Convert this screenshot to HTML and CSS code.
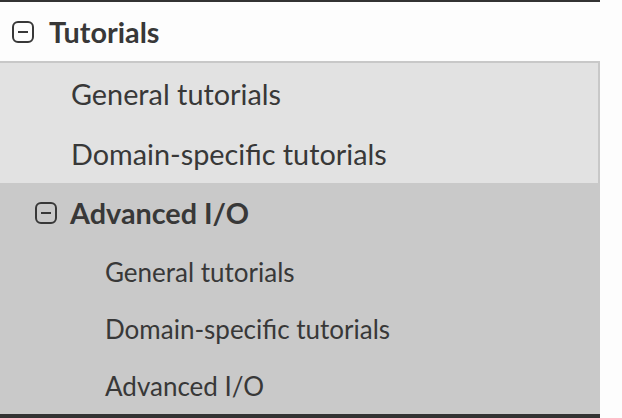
FILE: index.html
```html
<!DOCTYPE html>
<html>

<head>
    <title>Tutorials</title>
    <link rel="stylesheet" href="styles.css">
</head>

<body>
    <nav class="toc">
        <!-- Top section -->
        <div class="toc-head">
            <svg class="toggle" width="22" height="22" viewBox="0 0 22 22">
                <rect x="1" y="1" width="20" height="20" rx="5" fill="none" stroke="currentColor" stroke-width="2"/>
                <line x1="6" y1="11" x2="16" y2="11" stroke="currentColor" stroke-width="2"/>
            </svg>
            <span>Tutorials</span>
        </div>

        <ul class="toc-list level-1">
            <li class="toc-item">General tutorials</li>
            <li class="toc-item">Domain-specific tutorials</li>
        </ul>

        <!-- Current section -->
        <div class="toc-group">
            <div class="toc-head sub-head">
                <svg class="toggle" width="22" height="22" viewBox="0 0 22 22">
                    <rect x="1" y="1" width="20" height="20" rx="5" fill="none" stroke="currentColor" stroke-width="2"/>
                    <line x1="6" y1="11" x2="16" y2="11" stroke="currentColor" stroke-width="2"/>
                </svg>
                <span>Advanced I/O</span>
            </div>
            <ul class="toc-list level-2">
                <li class="toc-item">General tutorials</li>
                <li class="toc-item">Domain-specific tutorials</li>
                <li class="toc-item">Advanced I/O</li>
            </ul>
        </div>

        <div class="toc-foot"></div>
    </nav>
</body>

</html>
```

FILE: styles.css
```css
body {
    margin: 0;
    background-color: #fdfdfd;
    font-family: 'Lato', 'Liberation Sans', sans-serif;
    color: #383838;
}

.toc {
    width: 600px;
    border-top: 2px solid #333;
}

.toc-head {
    display: flex;
    align-items: center;
    gap: 15px;
    height: 59px;
    padding-left: 12px;
    font-weight: bold;
    font-size: 28.8px;
    border-bottom: 2px solid #c8c8c8;
}

.toggle {
    flex: none;
}

.toc-list {
    list-style: none;
    margin: 0;
    padding: 0;
}

.level-1 {
    background-color: #e2e2e2;
    border-right: 2px solid #c8c8c8;
}

.level-1 .toc-item {
    height: 60px;
    line-height: 62px;
    padding-left: 71px;
    font-size: 28.8px;
}

.toc-group {
    background-color: #c9c9c9;
}

.sub-head {
    height: 60px;
    padding-left: 35px;
    gap: 13px;
    border-bottom: none;
}

.level-2 .toc-item {
    height: 57px;
    line-height: 58px;
    padding-left: 105px;
    font-size: 26px;
}

.toc-foot {
    height: 6px;
    background-color: #333;
}
```
